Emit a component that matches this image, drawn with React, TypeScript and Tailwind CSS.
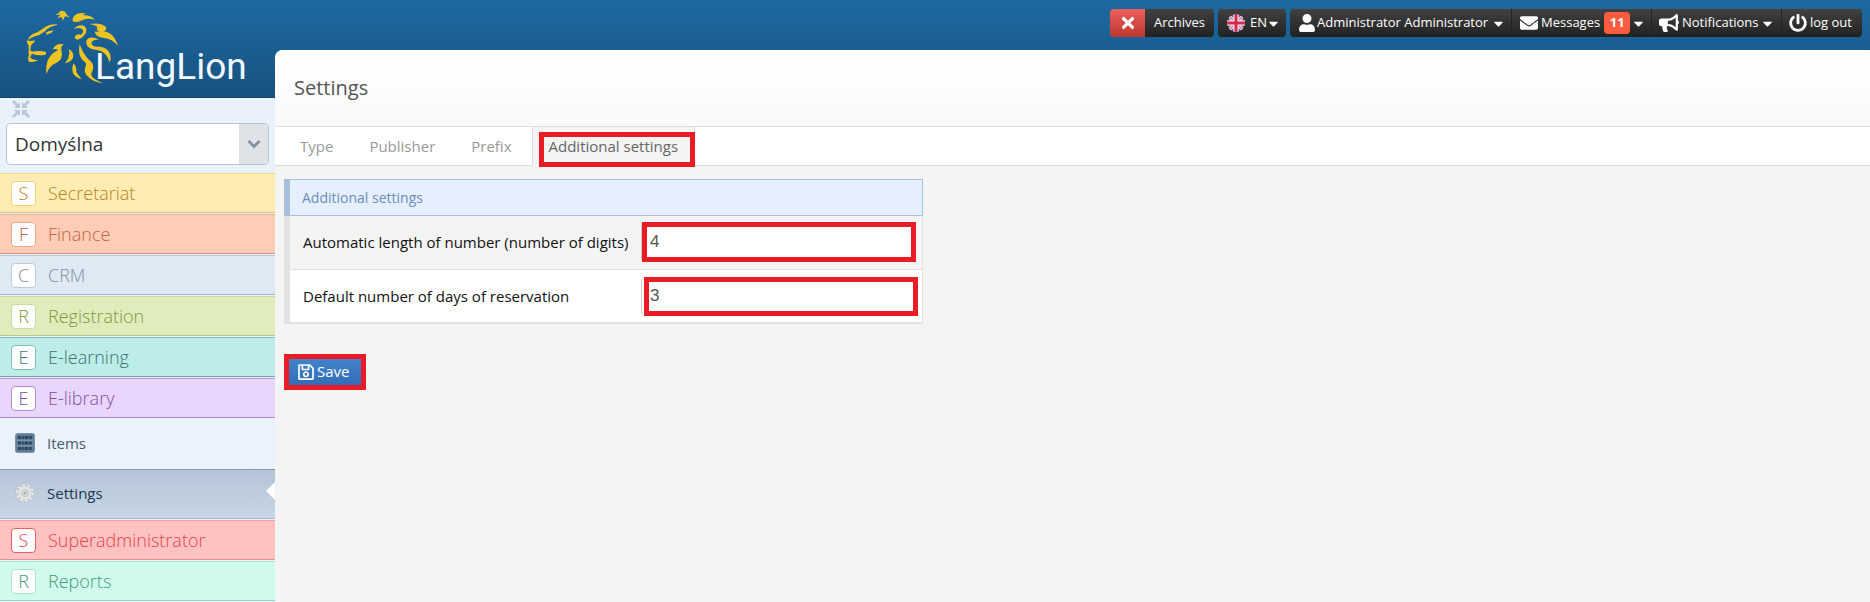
import React from 'react';
import { FaBullhorn, FaCaretDown, FaEnvelope, FaPowerOff, FaRegSave, FaTimes, FaUser } from 'react-icons/fa';

type Module = { letter: string; name: string; row: string; badge: string };

const modules: Module[] = [
  { letter: 'S', name: 'Secretariat', row: 'bg-[#ffecb3] border-t-[#f0d78c] border-b-[#d8bf78] text-[#b58320]', badge: 'border-[#f0d47c]' },
  { letter: 'F', name: 'Finance', row: 'bg-[#ffccb5] border-t-[#e9b195] border-b-[#d98f78] text-[#bd6748]', badge: 'border-[#eda888]' },
  { letter: 'C', name: 'CRM', row: 'bg-[#dfe9f4] border-t-[#b9c8dc] border-b-[#a3b3cc] text-[#84909c]', badge: 'border-[#bccbdc]' },
  { letter: 'R', name: 'Registration', row: 'bg-[#e0ecbc] border-t-[#c9dba0] border-b-[#b7c98a] text-[#7d9a38]', badge: 'border-[#cbdc9b]' },
  { letter: 'E', name: 'E-learning', row: 'bg-[#bdede8] border-t-[#86b8b4] border-b-[#6fa3ad] text-[#3f7370]', badge: 'border-[#84bdb8]' },
  { letter: 'E', name: 'E-library', row: 'bg-[#ead5fd] border-t-[#b99ad2] border-b-[#a98bc4] text-[#7b52a5]', badge: 'border-[#b48bd6]' },
];

const lowerModules: Module[] = [
  { letter: 'S', name: 'Superadministrator', row: 'bg-[#ffc2c2] border-t-[#f3a0a0] border-b-[#e88f8f] text-[#e8434a]', badge: 'border-[#e8605f]' },
  { letter: 'R', name: 'Reports', row: 'bg-[#d0fbec] border-t-[#aee0d0] border-b-[#9ad0be] text-[#459c78]', badge: 'border-[#a9e2cf]' },
];

function ModuleLink({ letter, name, row, badge }: Module) {
  return (
    <a href="#" className={`flex h-10 items-center border-y pl-[11px] text-[18px] font-[350] ${row}`}>
      <span className={`flex h-[25px] w-[25px] items-center justify-center rounded border bg-white ${badge}`}>{letter}</span>
      <span className="ml-3">{name}</span>
    </a>
  );
}

function Lion() {
  return (
    <svg viewBox="66 30 285 225" className="h-[75px] w-[95px] shrink-0 overflow-visible" fill="#ecc422" aria-hidden="true">
      <path d="M167 44 Q177 41 181 33 Q188 30 195 35 Q198 44 211 53 Q202 50 195 49 Q192 54 188 63 Q187 52 183 51 Q178 54 172 54 Q180 48 180 42 Q174 46 167 44Z" />
      <path d="M171 73 Q146 72 128 86 Q113 98 98 102 Q87 108 84 121 Q91 113 101 110 Q121 105 133 95 Q148 79 171 75Z" />
      <path d="M137 99 Q143 93 161 91 Q157 99 145 102 L140 106 Q142 100 137 99Z" />
      <path d="M80 121 Q92 125 104 121 Q105 128 97 131 Q91 136 91 151 Q95 156 105 154 Q122 152 137 155 Q141 162 134 165 Q113 168 96 161 Q91 168 91 174 Q99 180 114 181 Q101 189 87 185 Q82 179 87 164 Q83 155 87 149 Q85 144 86 137 Q80 130 80 121Z" />
      <path d="M218 64 Q216 47 236 40 Q246 38 258 39 Q246 43 252 46 Q272 45 285 59 Q265 53 248 60 Q232 69 218 64Z" />
      <path d="M222 87 Q232 74 248 76 Q263 82 258 98 Q249 114 232 119 Q222 116 225 108 Q231 101 244 104 Q252 97 247 88 Q237 81 222 87Z" />
      <path d="M268 72 Q300 66 317 80 Q324 88 310 94 Q341 96 354 138 Q336 116 312 114 Q288 112 284 96 Q286 92 298 97 Q287 89 292 81 Q283 74 268 72Z" />
      <path d="M297 118 Q268 106 259 122 Q256 139 275 147 Q291 150 303 153 Q321 161 329 187 Q338 164 320 148 Q307 138 288 140 Q272 137 275 125 Q282 119 297 118Z" />
      <path d="M191 133 Q168 129 158 148 Q166 145 175 150 Q154 159 145 178 Q137 194 139 222 Q149 197 167 190 Q190 180 185 154 Q180 141 191 133Z" />
      <path d="M206 147 Q224 157 219 174 Q212 188 194 189 Q206 179 206 168 Q210 158 206 147Z" />
      <path d="M239 133 Q232 164 250 183 Q262 189 257 199 Q249 215 262 228 Q280 248 311 250 Q289 243 278 232 Q270 222 278 212 Q285 190 265 178 Q249 160 239 133Z" />
      <path d="M221 190 Q213 206 220 221 Q227 232 245 238 Q235 225 229 216 Q231 204 221 190Z" />
    </svg>
  );
}

function CollapseIcon() {
  const arrow = 'M0 2 L2 0 L6 4 L8 2 V8 H2 L4 6Z';
  return (
    <svg viewBox="0 0 18 18" className="h-[18px] w-[18px]" fill="#b9c7d9" aria-hidden="true">
      <path d={arrow} />
      <path d={arrow} transform="translate(18 0) scale(-1 1)" />
      <path d={arrow} transform="translate(0 18) scale(1 -1)" />
      <path d={arrow} transform="translate(18 18) scale(-1 -1)" />
    </svg>
  );
}

function Flag() {
  return (
    <svg viewBox="0 0 18 18" className="h-[18px] w-[18px]" aria-hidden="true">
      <defs><clipPath id="disc"><circle cx="9" cy="9" r="9" /></clipPath></defs>
      <g clipPath="url(#disc)">
        <rect width="18" height="18" fill="#4d5599" />
        <path d="M0 0 18 18M18 0 0 18" stroke="#e6dce8" strokeWidth="3.6" />
        <path d="M0 0 18 18M18 0 0 18" stroke="#cf6679" strokeWidth="1.2" />
        <path d="M9 0V18M0 9H18" stroke="#f3e9ee" strokeWidth="5.4" />
        <path d="M9 0V18M0 9H18" stroke="#d5284a" strokeWidth="3" />
      </g>
    </svg>
  );
}

function ItemsIcon() {
  return (
    <svg viewBox="0 0 20 20" className="h-5 w-5" aria-hidden="true">
      <rect x=".5" y=".5" width="19" height="19" rx="2" fill="#5f7d96" stroke="#7d94a8" />
      <path d="M3 4.5H17M3 10H17M3 15.5H17" stroke="#2f475b" strokeWidth="3" strokeDasharray="3 .8 2 .8 3.4 .8" />
      <path d="M2 7.3H18M2 12.8H18" stroke="#7e9ab0" strokeWidth="1" />
    </svg>
  );
}

function GearIcon() {
  return (
    <svg viewBox="0 0 20 20" className="h-5 w-5" aria-hidden="true">
      <circle cx="10" cy="10" r="8" fill="none" stroke="#a9adb2" strokeWidth="3.4" strokeDasharray="2.7 2.326" />
      <circle cx="10" cy="10" r="8" fill="none" stroke="#efefee" strokeWidth="2.4" strokeDasharray="2.4 2.626" />
      <circle cx="10" cy="10" r="7" fill="#e7e7e6" stroke="#c3c5c8" strokeWidth=".6" />
      <circle cx="10" cy="10" r="3.8" fill="#d5d7d9" stroke="#c0c3c6" strokeWidth=".8" />
      <circle cx="10" cy="10" r="1.6" fill="#aab2bb" />
    </svg>
  );
}

const dark = 'bg-linear-to-b from-[#414141] to-[#222222] text-white';
const menuItem = 'flex h-full items-center border-l border-[#222] first:border-l-0';

export default function App() {
  return (
    <div className="flex min-h-screen bg-[#f4f4f4] bg-[linear-gradient(#1d69a3,#18527f)] bg-[length:100%_98px] bg-no-repeat font-['Open_Sans',sans-serif] text-[14px]">
      <aside className="flex w-[275px] shrink-0 flex-col">
        <a href="#" className="flex h-[98px] items-start border-b border-[#164569] pl-[22px] pt-[10px]" aria-label="LangLion">
          <Lion />
          <span className="-ml-[22px] mt-9 font-['Roboto',sans-serif] text-[37px] leading-[42px] text-[#f2f8ff]">LangLion</span>
        </a>
        <div className="flex-1 bg-[#e9f1fb]">
          <button type="button" aria-label="Collapse menu" className="ml-3 mt-[2px] block h-[18px]"><CollapseIcon /></button>
          <div className="relative mx-[6px] mb-2 mt-[5px]">
            <select aria-label="Branch" className="block h-[42px] w-full appearance-none rounded-sm border border-[#b3c5d6] bg-white pl-2 text-[19px] text-[#333]">
              <option>Domyślna</option>
            </select>
            <span className="pointer-events-none absolute inset-y-px right-px flex w-[29px] items-center justify-center bg-[#dfe3e8]">
              <svg viewBox="0 0 14 10" className="h-[10px] w-[14px]" fill="none" stroke="#82919d" strokeWidth="2.8" aria-hidden="true"><path d="M1.5 2 7 7.5 12.5 2" /></svg>
            </span>
          </div>
          <nav className="flex flex-col gap-px">
            {modules.map((m) => <ModuleLink key={m.name} {...m} />)}
            <div className="text-[15px]">
              <a href="#" className="flex h-[50px] items-center bg-[#eaf2fb] pb-[2px] pl-[15px] text-[#4a5b6c]">
                <ItemsIcon /><span className="ml-3">Items</span>
              </a>
              <a href="#" className="relative flex h-[50px] items-center border-b border-t border-b-[#a9b9ca] border-t-[#8797a8] bg-linear-to-b from-[#b5c5d8] to-[#c7d6e5] pb-[2px] pl-[15px] text-[#1d3850]">
                <GearIcon /><span className="ml-3">Settings</span>
                <svg viewBox="0 0 9 18" className="absolute right-0 top-3 h-[18px] w-[9px]" aria-hidden="true"><path d="M9 0 0 9 9 18Z" fill="#fff" /></svg>
              </a>
            </div>
            {lowerModules.map((m) => <ModuleLink key={m.name} {...m} />)}
          </nav>
        </div>
      </aside>

      <div className="flex min-w-0 flex-1 flex-col">
        <header className="flex h-[50px] items-start justify-end gap-1 pr-2 pt-[9px] text-[13px]">
          <div className="flex h-7 overflow-hidden rounded">
            <button type="button" aria-label="Close" className="flex w-[35px] items-center justify-center bg-linear-to-b from-[#ee5f5b] to-[#bd362f] text-white"><FaTimes size={18} /></button>
            <button type="button" className={`w-[69px] ${dark}`}>Archives</button>
          </div>
          <button type="button" className={`flex h-7 w-[68px] items-center rounded pl-[9px] ${dark}`}>
            <Flag /><span className="ml-[5px]">EN</span><FaCaretDown size={15} className="-ml-px" />
          </button>
          <div className={`flex h-7 items-center overflow-hidden rounded ${dark}`}>
            <button type="button" className={`${menuItem} w-[221px] pl-2`}><FaUser size={18} /><span className="ml-px">Administrator Administrator</span><FaCaretDown size={15} className="ml-[3px]" /></button>
            <button type="button" className={`${menuItem} w-[140px] pl-2`}><FaEnvelope size={18} /><span className="ml-[3px]">Messages</span><b className="ml-1 flex h-[22px] w-[26px] items-center justify-center rounded bg-[#fc5b3f]">11</b><FaCaretDown size={15} className="ml-px" /></button>
            <button type="button" className={`${menuItem} w-[130px] pl-[7px]`}><FaBullhorn size={20} /><span className="ml-[3px]">Notifications</span><FaCaretDown size={15} className="ml-px" /></button>
            <button type="button" className={`${menuItem} w-[81px] pl-[7px]`}><FaPowerOff size={18} /><span className="ml-[3px]">log out</span></button>
          </div>
        </header>

        <main className="flex-1 rounded-tl-lg bg-[#f4f4f4]">
          <h1 className="flex h-[77px] items-center rounded-tl-lg border-b border-[#dcdcdc] bg-linear-to-b from-white to-[#f9f9f9] pl-[19px] text-[20px] text-[#555]">Settings</h1>
          <nav className="flex h-[39px] border-b border-[#dcdcdc] bg-white pl-[7px] text-[15px] text-[#999]">
            <a href="#" className="flex items-center px-[18px]">Type</a>
            <a href="#" className="flex items-center px-[18px]">Publisher</a>
            <a href="#" className="flex items-center px-[18px]">Prefix</a>
            <a href="#" aria-current="page" className="relative -mb-px ml-[2px] flex items-center border-x border-[#dcdcdc] bg-[#f4f4f4] px-4 text-[#666]">
              Additional settings
              <span className="pointer-events-none absolute -bottom-px -right-px left-[6px] top-[5px] border-[5px] border-[#e81c24]" />
            </a>
          </nav>
          <form className="pl-[9px] pt-[13px]">
            <section className="w-[639px] max-w-full">
              <h2 className="flex h-[37px] items-center border border-l-[6px] border-[#aabfdc] bg-[#e4f0ff] pl-3 text-[14px] text-[#6f8db5]">Additional settings</h2>
              <div className="border-b-2 border-l-[6px] border-r border-[#e2e2e2] text-[15px] text-[#111]">
                <div className="flex h-[54px] items-center border-b border-[#e2e2e2] pb-px pl-[13px] pr-[6px]">
                  <label htmlFor="digits" className="flex-1">Automatic length of number (number of digits)</label>
                  <div className="w-[275px] rounded border-l border-[#ccc]">
                    <input id="digits" defaultValue="4" className="block h-10 w-[274px] border-[5px] border-[#e81c24] bg-white pl-[3px] font-['Liberation_Sans',sans-serif] text-[17px] text-[#555] outline-none" />
                  </div>
                </div>
                <div className="flex h-[52px] items-center bg-white pl-[13px] pr-1">
                  <label htmlFor="days" className="flex-1">Default number of days of reservation</label>
                  <div className="w-[277px] rounded border-l border-[#ccc] pl-[2px]">
                    <input id="days" defaultValue="3" className="block h-[39px] w-[274px] border-[5px] border-[#e81c24] bg-white pl-px font-['Liberation_Sans',sans-serif] text-[17px] text-[#555] outline-none" />
                  </div>
                </div>
              </div>
            </section>
            <button type="submit" className="mt-[30px] flex h-9 w-[82px] items-center border-[5px] border-[#e81c24] bg-linear-to-b from-[#4488cc] to-[#2f69b5] bg-origin-border pb-px pl-2 text-[15px] text-white">
              <FaRegSave size={18} /><span className="ml-[2px]">Save</span>
            </button>
          </form>
        </main>
      </div>
    </div>
  );
}
